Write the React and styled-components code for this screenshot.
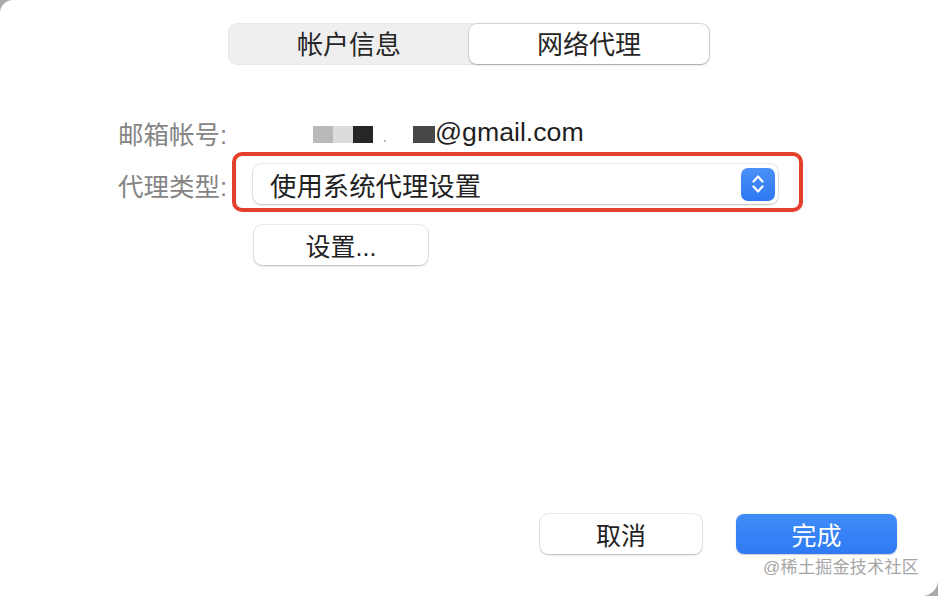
import React from "react";
import styled, { createGlobalStyle } from "styled-components";

const Global = createGlobalStyle`
  html, body { margin: 0; padding: 0; background: #a9a9a9; }
  body { width: 938px; height: 596px; overflow: hidden; }
  * { box-sizing: border-box; }
`;

const FONT = `"Liberation Sans", "Noto Sans CJK SC", sans-serif`;

const Window = styled.div`
  position: relative;
  width: 938px;
  height: 596px;
  background: #ffffff;
  border-radius: 13px 0 16px 0;
  display: flex;
  flex-direction: column;
  font-family: ${FONT};
  color: #222;
  padding: 23px 41px 42px 118px;
`;

const TabsRow = styled.div`
  display: flex;
  justify-content: center;
  margin-left: -77px;
`;

const Segmented = styled.div`
  display: flex;
  width: 482px;
  height: 42px;
  background: #efefef;
  border-radius: 9px;
  padding: 1px;
  box-shadow: inset 0 0 0 0.5px rgba(0, 0, 0, 0.06);
`;

const Segment = styled.div`
  flex: 1;
  display: flex;
  align-items: center;
  justify-content: center;
  padding-bottom: 3px;
  font-size: 26px;
  color: #262626;
  border-radius: 8px;
  background: ${(p) => (p.$active ? "#fff" : "transparent")};
  box-shadow: ${(p) =>
    p.$active ? "0 0 0 0.5px rgba(0,0,0,0.16), 0 1px 2px rgba(0,0,0,0.22)" : "none"};
`;

const Form = styled.div`
  display: grid;
  grid-template-columns: 114px auto;
  justify-content: start;
  align-items: center;
  margin-top: 52px;
`;

const Label = styled.div`
  font-size: 25.5px;
  line-height: 30px;
  color: #858585;
  white-space: nowrap;
  margin-top: ${(p) => p.$mt || 0}px;
`;

const EmailRow = styled.div`
  display: flex;
  align-items: center;
  height: 30px;
  margin-left: 81px;
  margin-bottom: 5px;
  font-size: 26.7px;
  color: #1f1f1f;
`;

const Mask = styled.span`
  display: inline-block;
  width: ${(p) => p.$w}px;
  height: 17px;
  background: ${(p) => p.$c};
  margin-top: 5px;
`;

const Dot = styled.span`
  display: inline-block;
  width: 2px;
  height: 2px;
  background: #bbb;
  margin: 18px 27px 0 11px;
`;

const Highlight = styled.div`
  width: 571px;
  height: 60px;
  border: 4px solid #e2402b;
  border-radius: 10px;
  padding: 8px 21px 4px 17px;
`;

const Select = styled.div`
  height: 40px;
  display: flex;
  align-items: center;
  justify-content: space-between;
  padding: 0 3px 0 17px;
  background: #fff;
  border-radius: 8px;
  box-shadow: 0 0 0 0.5px rgba(0, 0, 0, 0.14), 0 1px 2px rgba(0, 0, 0, 0.2);
  font-size: 26.4px;
  color: #1f1f1f;
`;

const Stepper = styled.div`
  width: 34px;
  height: 33px;
  border-radius: 7px;
  background: linear-gradient(#4a90f8, #2d78f2);
  display: flex;
  align-items: center;
  justify-content: center;
`;

const Button = styled.div`
  display: flex;
  align-items: center;
  justify-content: center;
  width: ${(p) => p.$w}px;
  height: 40px;
  border-radius: 8px;
  font-size: 25px;
  color: ${(p) => (p.$primary ? "#fff" : "#222")};
  background: ${(p) => (p.$primary ? "linear-gradient(#3f8cf8, #2f7af3)" : "#fff")};
  box-shadow: ${(p) =>
    p.$primary
      ? "0 0.5px 1.5px rgba(0,0,0,0.2)"
      : "0 0 0 0.5px rgba(0,0,0,0.14), 0 1px 2px rgba(0,0,0,0.22)"};
`;

const SettingsCell = styled.div`
  grid-column: 2;
  margin-left: 22px;
  margin-top: 13px;
`;

const Footer = styled.div`
  margin-top: auto;
  display: flex;
  justify-content: flex-end;
  gap: 34px;
`;

const Watermark = styled.div`
  position: absolute;
  right: 19px;
  bottom: 18px;
  font-size: 17px;
  color: #a6a6a6;
  letter-spacing: 0.3px;
`;

function Chevrons() {
  return (
    <svg width="16" height="24" viewBox="0 0 16 24" fill="none">
      <path d="M3.5 9.5 L8 4.5 L12.5 9.5" stroke="#fff" strokeWidth="2.2" strokeLinecap="round" strokeLinejoin="round" />
      <path d="M3.5 14.5 L8 19.5 L12.5 14.5" stroke="#fff" strokeWidth="2.2" strokeLinecap="round" strokeLinejoin="round" />
    </svg>
  );
}

export default function App() {
  return (
    <>
      <Global />
      <Window>
        <TabsRow>
          <Segmented>
            <Segment>帐户信息</Segment>
            <Segment $active>网络代理</Segment>
          </Segmented>
        </TabsRow>
        <Form>
          <Label>邮箱帐号:</Label>
          <EmailRow>
            <Mask $w={20} $c="#b9b9b9" />
            <Mask $w={20} $c="#dcdcdc" />
            <Mask $w={20} $c="#262626" />
            <Dot />
            <Mask $w={22} $c="#474747" />
            <span>@gmail.com</span>
          </EmailRow>
          <Label $mt={10}>代理类型:</Label>
          <Highlight>
            <Select>
              <span>使用系统代理设置</span>
              <Stepper>
                <Chevrons />
              </Stepper>
            </Select>
          </Highlight>
          <SettingsCell>
            <Button $w={174}>设置...</Button>
          </SettingsCell>
        </Form>
        <Footer>
          <Button $w={162}>取消</Button>
          <Button $w={161} $primary>完成</Button>
        </Footer>
        <Watermark>@稀土掘金技术社区</Watermark>
      </Window>
    </>
  );
}
